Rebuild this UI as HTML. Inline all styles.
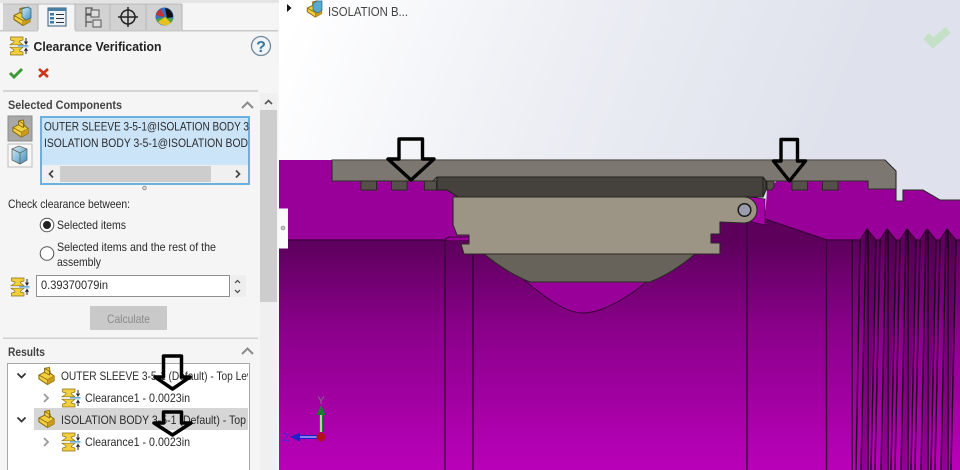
<!DOCTYPE html>
<html><head><meta charset="utf-8"><style>
html,body{margin:0;padding:0;background:#fff}
svg{display:block}
text{font-family:"Liberation Sans",sans-serif}
</style></head><body>
<svg width="960" height="470" viewBox="0 0 960 470" xmlns="http://www.w3.org/2000/svg">
<defs>
<linearGradient id="bg" gradientUnits="userSpaceOnUse" x1="300" y1="0" x2="800" y2="200"><stop offset="0" stop-color="#ffffff"/><stop offset="0.5" stop-color="#eceef4"/><stop offset="1" stop-color="#dfe2ec"/></linearGradient>
<linearGradient id="pur" gradientUnits="userSpaceOnUse" x1="0" y1="240" x2="0" y2="470"><stop offset="0" stop-color="#5c005c"/><stop offset="0.4" stop-color="#8b008b"/><stop offset="1" stop-color="#b900b9"/></linearGradient>
<linearGradient id="cube" x1="0" y1="0" x2="1" y2="1"><stop offset="0" stop-color="#d8eef8"/><stop offset="1" stop-color="#3d8fb8"/></linearGradient>
<symbol id="part" viewBox="0 0 20 20">
<path d="M2 9 L8 6 L8 2 L13 1 L14 7 L18 10 L18 15 L11 19 L2 13 Z" fill="#f2cf3f" stroke="#8a6d10" stroke-width="1.1" stroke-linejoin="round"/>
<path d="M2 9 L11 14 L18 10 M11 14 L11 19 M8 6 L13 9 L14 7 M8 2 L13 5 L13 9" fill="none" stroke="#8a6d10" stroke-width="0.9"/>
<path d="M11 14 L18 10 L18 15 L11 19Z" fill="#c89a1e"/>
</symbol>
<symbol id="clr" viewBox="0 0 20 20">
<path d="M1.500 1 H14 V4 L10.500 5 V6 L14 8.800 H1 L5 6 V5 L1.500 4 Z" fill="#f3cf3e" stroke="#8a6f14" stroke-width="0.7"/>
<path d="M1.500 19 H14 V16 L10.500 15 V14 L14 11.200 H1 L5 14 V15 L1.500 16 Z" fill="#f3cf3e" stroke="#8a6f14" stroke-width="0.7"/>
<path d="M9 9.500 H19.500 M9 10.800 H19.500" stroke="#6aaad6" stroke-width="0.9"/>
<path d="M17 2 V7 M15.500 5.500 L17 8 L18.500 5.500 M17 18 V13.500 M15.500 15 L17 12.500 L18.500 15" stroke="#222" stroke-width="1" fill="none"/>
</symbol>
</defs>

<!-- panel -->
<rect width="279" height="470" fill="#f5f5f5"/>
<rect width="279" height="3" fill="#e4e4e4"/>
<rect x="3" y="4" width="179" height="26" fill="#d2d2d2"/>
<rect x="38" y="4" width="37" height="27" fill="#f5f5f5"/>
<path d="M38 4V30M75 4V30M110 4V30M146 4V30M182 4V30M3 4H182" stroke="#b5b5b5" fill="none"/>
<rect x="0" y="30" width="38" height="1.500" fill="#c8c8c8"/><rect x="75" y="30" width="203" height="1.500" fill="#c8c8c8"/>
<use href="#part" x="12" y="6" width="20" height="21"/>
<path d="M22 9l6-2 3 2v9l-5 2-4-3z" fill="url(#cube)" stroke="#2a6c90" stroke-width=".8"/>
<rect x="48" y="8" width="18" height="18" fill="#eef4f8" stroke="#345a78" stroke-width="1"/>
<rect x="48" y="8" width="18" height="3" fill="#4a7fa4"/>
<path d="M50 13h4v2.500h-4zm0 4h4v2.500h-4zm0 4h4v2.500h-4z" fill="#3a79a6"/><path d="M56 14.500h8M56 18.500h8M56 22.500h8" stroke="#333" stroke-width="1"/>
<path d="M86 8h6v6h-6zM86 14v13M86 15h5M86 22h6" fill="none" stroke="#555" stroke-width="1.200"/><rect x="91" y="10" width="8" height="7" fill="#ddd" stroke="#555"/><rect x="93" y="20" width="8" height="7" fill="#ddd" stroke="#555"/>
<circle cx="128" cy="17" r="7" fill="none" stroke="#222" stroke-width="1.500"/><path d="M128 7v20M118 17h20" stroke="#222" stroke-width="1.500"/>
<circle cx="164.500" cy="16.500" r="9" fill="#3a6fc0"/><path d="M156 19a9 9 0 0 0 17 0l-8-2z" fill="#4aa83a"/><path d="M165 8a9 9 0 0 1 8 9l-6 1z" fill="#111"/><path d="M158 22a9 9 0 0 0 13 1l-6-6z" fill="#e8c020"/><path d="M156 15a9 9 0 0 1 5-6l3 8z" fill="#c83030"/>

<use href="#clr" x="9" y="36" width="20" height="20"/>
<text x="33.500" y="51" font-size="13" font-weight="bold" fill="#222" textLength="128" lengthAdjust="spacingAndGlyphs">Clearance Verification</text>
<circle cx="261" cy="46" r="9.500" fill="#f0f4f8" stroke="#6f8798" stroke-width="1.300"/>
<text x="261" y="52" font-size="16" font-weight="bold" fill="#3576a4" text-anchor="middle">?</text>
<path d="M10 73 L14 77 L22 69" fill="none" stroke="#3c9a35" stroke-width="3"/>
<path d="M39 69 L48 77 M48 69 L39 77" fill="none" stroke="#d03318" stroke-width="2.600"/>
<rect x="3" y="90" width="255" height="2" fill="#d4d4d4"/>
<text x="8" y="109" font-size="12" font-weight="bold" fill="#444" textLength="114" lengthAdjust="spacingAndGlyphs">Selected Components</text>
<path d="M242 108 L247.500 102.500 L253 108" fill="none" stroke="#8a8a8a" stroke-width="2"/>

<!-- scrollbar -->
<rect x="260" y="93" width="17" height="377" fill="#f0f0f0"/>
<rect x="260" y="110" width="17" height="192" fill="#cdcdcd"/>
<path d="M265 104 L268.500 100.500 L272 104" fill="none" stroke="#555" stroke-width="1.600"/>

<!-- selection buttons -->
<rect x="8" y="116" width="24" height="25" fill="#a8a8a8" stroke="#8c8c8c"/>
<use href="#part" x="11" y="118" width="19" height="21"/>
<rect x="8" y="144" width="24" height="23" fill="#f7f7f7" stroke="#bdbdbd"/>
<path d="M12 149l7-3 8 3v11l-7 4-8-4z" fill="url(#cube)" stroke="#666" stroke-width=".8"/><path d="M12 149l8 4 7-4M20 153v11" fill="none" stroke="#555" stroke-width=".7"/>

<!-- list -->
<rect x="41" y="117" width="208" height="67" fill="#cce4f7" stroke="#6cb0e0" stroke-width="2"/>
<text x="44" y="130.500" font-size="12" fill="#2a2a2a" textLength="205" lengthAdjust="spacingAndGlyphs">OUTER SLEEVE 3-5-1@ISOLATION BODY 3</text>
<text x="44" y="147" font-size="12" fill="#2a2a2a" textLength="204" lengthAdjust="spacingAndGlyphs">ISOLATION BODY 3-5-1@ISOLATION BOD</text>
<rect x="42" y="165" width="206" height="18" fill="#f0f0f0"/>
<rect x="60" y="166" width="151" height="16" fill="#cdcdcd"/>
<path d="M53 170.500 L49.500 174 L53 177.500 M236 170.500 L239.500 174 L236 177.500" fill="none" stroke="#444" stroke-width="1.700"/>
<circle cx="144.500" cy="188" r="1.800" fill="#ddd" stroke="#999"/>

<text x="8" y="208" font-size="12" fill="#2a2a2a" textLength="122" lengthAdjust="spacingAndGlyphs">Check clearance between:</text>
<circle cx="47" cy="225" r="6.800" fill="#fff" stroke="#555"/><circle cx="47" cy="225" r="4" fill="#222"/>
<text x="57" y="229" font-size="12" fill="#2a2a2a" textLength="69" lengthAdjust="spacingAndGlyphs">Selected items</text>
<circle cx="47" cy="253.500" r="6.800" fill="#fff" stroke="#555"/>
<text x="57" y="251" font-size="12" fill="#2a2a2a" textLength="159" lengthAdjust="spacingAndGlyphs">Selected items and the rest of the</text>
<text x="57" y="266" font-size="12" fill="#2a2a2a" textLength="44" lengthAdjust="spacingAndGlyphs">assembly</text>

<use href="#clr" x="10" y="277" width="20" height="20"/>
<rect x="36.500" y="275.500" width="193" height="21" fill="#fff" stroke="#8f8f8f"/>
<text x="41" y="289" font-size="12" fill="#2a2a2a" textLength="67" lengthAdjust="spacingAndGlyphs">0.39370079in</text>
<rect x="231" y="275" width="15" height="22" fill="#eeeeee"/>
<path d="M235 283 L237.500 280.500 L240 283 M235 290 L237.500 292.500 L240 290" fill="none" stroke="#444" stroke-width="1.200"/>
<rect x="90" y="306" width="77" height="24" fill="#c9c9c9"/>
<text x="107" y="323" font-size="12" fill="#8a8a8a" textLength="43" lengthAdjust="spacingAndGlyphs">Calculate</text>
<rect x="3" y="337.500" width="255" height="1.500" fill="#d0d0d0"/>
<text x="8" y="356" font-size="12" font-weight="bold" fill="#444" textLength="37" lengthAdjust="spacingAndGlyphs">Results</text>
<path d="M242 354 L247.500 348.500 L253 354" fill="none" stroke="#8a8a8a" stroke-width="2"/>

<!-- results -->
<rect x="7.500" y="363.500" width="242" height="110" fill="#fff" stroke="#a8a8a8"/>
<rect x="34" y="408" width="214" height="22" fill="#d6d6d6"/>
<path d="M17.500 373.500 L21.500 377.500 L25.500 373.500 M17.500 417.500 L21.500 421.500 L25.500 417.500" fill="none" stroke="#333" stroke-width="1.800"/>
<path d="M44 394 L48 398 L44 402 M44 438 L48 442 L44 446" fill="none" stroke="#999" stroke-width="1.800"/>
<use href="#part" x="37" y="366" width="19" height="20"/>
<use href="#part" x="37" y="409" width="19" height="20"/>
<use href="#clr" x="61" y="388" width="20" height="20"/>
<use href="#clr" x="61" y="432" width="20" height="20"/>
<svg x="0" y="360" width="248" height="110" viewBox="0 360 248 110">
<text x="61" y="380" font-size="12" fill="#2a2a2a" textLength="191" lengthAdjust="spacingAndGlyphs">OUTER SLEEVE 3-5-1 (Default) - Top Lev</text>
<text x="61" y="424" font-size="12" fill="#2a2a2a" textLength="185" lengthAdjust="spacingAndGlyphs">ISOLATION BODY 3-5-1 (Default) - Top</text>
</svg>
<text x="85" y="402" font-size="12" fill="#2a2a2a" textLength="105" lengthAdjust="spacingAndGlyphs">Clearance1 - 0.0023in</text>
<text x="85" y="446" font-size="12" fill="#2a2a2a" textLength="105" lengthAdjust="spacingAndGlyphs">Clearance1 - 0.0023in</text>
<path d="M163.500 356 H181.500 V377 H190 L172.500 389 L155 377 H163.500 Z" fill="none" stroke="#000" stroke-width="3.500" stroke-linejoin="round"/>
<path d="M163.500 412 H181.500 V423 H191 L172.500 435 L154 423 H163.500 Z" fill="none" stroke="#000" stroke-width="3.500" stroke-linejoin="round"/>

<!-- viewport -->
<rect x="279" y="0" width="681" height="240" fill="url(#bg)"/>
<!-- dark lower gradient -->
<rect x="279" y="239" width="681" height="231" fill="url(#pur)"/>
<rect x="700" y="210" width="260" height="32" fill="#5c005c"/>

<!-- upper bright purple: left and right -->
<path d="M279 160 H332 V181 H447 V190 L458 197 V235 H469 V240 H279 Z" fill="#990099"/>
<path d="M767 190 L777 181 H868 V189 H896 V201 H903 V190 H923 L940 200 H960 V240 H956 L947 229 L940 240 H936 L927 229 L920 240 H916 L907 229 L900 240 H896 L887 229 L880 240 H876 L867 229 L860 240 H827 L765 219 Z" fill="#990099"/>
<path d="M279 240 H447" stroke="#3c003c" stroke-width="1.200"/>
<path d="M765 219 L827 240 H860 L867 229 L876 240 H880 L887 229 L896 240 H900 L907 229 L916 240 H920 L927 229 L936 240 H940 L947 229 L956 240 H960" fill="none" stroke="#3c003c" stroke-width="1.200"/>
<path d="M896 189 V201 H903 V190 H923 L940 200 H960" fill="none" stroke="#2c2a28" stroke-width="1.100"/>

<!-- thread bands -->
<g fill="#3c003c" fill-opacity=".3">
<path d="M868 230 L876 240 L868 470 H861 Z"/>
<path d="M888 230 L896 240 L888 470 H881 Z"/>
<path d="M908 230 L916 240 L908 470 H901 Z"/>
<path d="M928 230 L936 240 L928 470 H921 Z"/>
<path d="M948 230 L956 240 L948 470 H941 Z"/>
</g>
<g stroke="#1e001e" stroke-width="1.400" fill="none">
<path d="M852 240V470M860 240L856 470M866 230L861 470M868 230L868 470M876 240L871 470"/>
<path d="M880 240L875 470M886 230L881 470M888 230L888 470M896 240L891 470"/>
<path d="M900 240L895 470M906 230L901 470M908 230L908 470M916 240L911 470"/>
<path d="M920 240L915 470M926 230L921 470M928 230L928 470M936 240L931 470"/>
<path d="M940 240L935 470M946 230L941 470M948 230L948 470M956 240L951 470"/>
</g>

<!-- vertical edges -->
<path d="M445 240V470M473 254V470M747 222V470M826.500 240V470" fill="none" stroke="#3a003a" stroke-width="1.400"/>

<!-- bright lens segment -->
<path d="M524 280 C545 297 565 313 583 313 C600 313 625 300 646 282 Z" fill="#990099"/>
<path d="M524 280 C545 297 565 313 583 313 C600 313 625 300 646 282" fill="none" stroke="#3c003c" stroke-width="1"/>

<!-- tongue -->
<path d="M445 239 L449 237 H469 V244 H461" fill="none" stroke="#3c003c" stroke-width="1.100"/>

<!-- tip wedge by pin -->
<path d="M750 197 L765 199 L765 225 L752 222 Z" fill="#a800a8" stroke="#3c003c" stroke-width=".7"/>

<!-- sleeve -->
<path d="M332 160 H885 L896 171 V189 H868 V181 H332 Z" fill="#7c7770" stroke="#2c2a28" stroke-width="1.100" stroke-linejoin="round"/>
<path d="M332 160 H885" stroke="#55514c" stroke-width="1.200"/>
<!-- tabs -->
<g fill="#55514a" stroke="#2b2925" stroke-width="1">
<rect x="361" y="181" width="15.500" height="9"/>
<rect x="391.500" y="181" width="15.500" height="9"/>
<rect x="424.500" y="181" width="12" height="9"/>
<rect x="792" y="181" width="15.500" height="9"/>
<rect x="822.500" y="181" width="15.500" height="9"/>
<path d="M767 181 H774 V187 L771 190 H767 Z"/>
</g>

<!-- dark bar -->
<path d="M437 177 H763 L766 181 V190 L763 197 H458 L447 190 H437 Z" fill="#45423d" stroke="#23211e" stroke-width="1.100"/>
<path d="M433 181 L437 177 M763 177V197" stroke="#23211e" fill="none"/>

<!-- lens -->
<path d="M484 254 C500 267 515 276 530 282 H650 C665 276 680 267 695 254 Z" fill="#68635a" stroke="#2b2925" stroke-width="1.100"/>

<!-- beige body -->
<path d="M453 197 H744 A13 13 0 0 1 744 223 L720 222 V234 H711 V243 H720 V254 H464 L461 244 H469 V235 H457 L453 225 Z" fill="#9c9484" stroke="#2b2925" stroke-width="1.100" stroke-linejoin="round"/>
<circle cx="744.500" cy="210" r="6.300" fill="#9b9dae" stroke="#1c1c1c" stroke-width="1.500"/>

<!-- arrows -->
<path d="M399 139 H422.500 V159 H434 L411 180 L388 159 H399 Z" fill="none" stroke="#000" stroke-width="3.400" stroke-linejoin="round"/>
<path d="M781 139.500 H797.500 V161 H805.500 L789.500 181 L773.500 161 H781 Z" fill="none" stroke="#000" stroke-width="3.400" stroke-linejoin="round"/>

<!-- splitter -->
<rect x="279" y="208.500" width="9" height="40" fill="#fbfbfb"/>
<circle cx="283" cy="228" r="1.800" fill="#ccc" stroke="#999"/>

<!-- top bar -->
<path d="M287 4 L291.500 8 L287 12 Z" fill="#111"/>
<use href="#part" x="305" y="0" width="19" height="18"/>
<path d="M313 4l4-3h5v9l-4 3-5-3z" fill="#5ba8d0" stroke="#2b6b90" stroke-width=".7"/>
<text x="328" y="16" font-size="12.500" fill="#444" textLength="80" lengthAdjust="spacingAndGlyphs">ISOLATION B...</text>

<!-- confirm check -->
<path d="M926 36 L933 43 L948 30" fill="none" stroke="#c4e0c6" stroke-width="8"/>

<!-- triad -->
<path d="M321 432 V412" stroke="#1f7a30" stroke-width="4"/>
<path d="M321 432 V412" stroke="#a6d8a0" stroke-width="2"/>
<path d="M321 405 L316.500 415 H325.500 Z" fill="#1c7a30"/>
<path d="M317 437 H297" stroke="#2020c8" stroke-width="4"/>
<path d="M317 437 H297" stroke="#9090f0" stroke-width="1.800"/>
<path d="M290 437 L300 432.500 V441.500 Z" fill="#2020c8"/>
<circle cx="321" cy="437" r="4.500" fill="#b01020"/>
<text x="321" y="404" font-size="11" fill="#777" text-anchor="middle">Y</text>
<text x="286" y="441" font-size="11" fill="#3a2ae0" text-anchor="middle">Z</text>
</svg>
</body></html>
